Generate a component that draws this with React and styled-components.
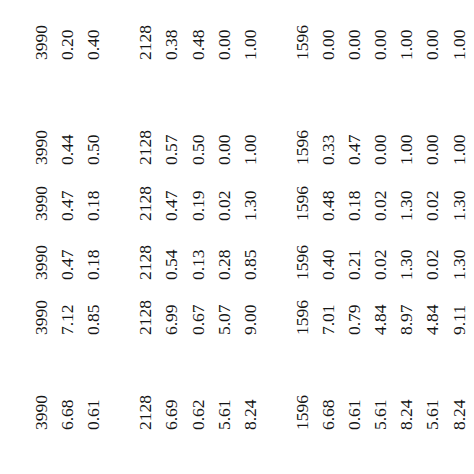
import React from 'react'
import styled, { createGlobalStyle } from 'styled-components'

const Global = createGlobalStyle`
  html, body {
    margin: 0;
    padding: 0;
    background: #fff;
  }
`

// columns as they read once the sheet is turned upright
const columns = [
  [['3990', '6.68', '0.61'], ['2128', '6.69', '0.62', '5.61', '8.24'], ['1596', '6.68', '0.61', '5.61', '8.24', '5.61', '8.24']],
  [['3990', '7.12', '0.85'], ['2128', '6.99', '0.67', '5.07', '9.00'], ['1596', '7.01', '0.79', '4.84', '8.97', '4.84', '9.11']],
  [['3990', '0.47', '0.18'], ['2128', '0.54', '0.13', '0.28', '0.85'], ['1596', '0.40', '0.21', '0.02', '1.30', '0.02', '1.30']],
  [['3990', '0.47', '0.18'], ['2128', '0.47', '0.19', '0.02', '1.30'], ['1596', '0.48', '0.18', '0.02', '1.30', '0.02', '1.30']],
  [['3990', '0.44', '0.50'], ['2128', '0.57', '0.50', '0.00', '1.00'], ['1596', '0.33', '0.47', '0.00', '1.00', '0.00', '1.00']],
  [['3990', '0.20', '0.40'], ['2128', '0.38', '0.48', '0.00', '1.00'], ['1596', '0.00', '0.00', '0.00', '1.00', '0.00', '1.00']],
]

const Page = styled.div`
  width: 474px;
  height: 474px;
  overflow: hidden;
  background: #fff;
`

const Sheet = styled.div`
  width: 474px;
  height: 474px;
  box-sizing: border-box;
  padding: 28px 0 0 44px;
  transform: rotate(-90deg);
  transform-origin: 50% 50%;
`

const Table = styled.div`
  display: grid;
  grid-template-columns: 95px 55px 59px 56px 105px 60px;
  grid-auto-rows: 26.1px;
  font-family: "Liberation Serif", "Times New Roman", serif;
  font-size: 17.5px;
  line-height: 26.1px;
  color: #141414;
`

const Cell = styled.div`
  white-space: nowrap;
`

const Gap = styled.div`
  grid-column: 1 / -1;
`

export default function App() {
  const groups = columns[0].map((g, gi) => g.length)
  return (
    <>
      <Global />
      <Page>
        <Sheet>
          <Table>
            {groups.map((len, gi) => (
              <React.Fragment key={gi}>
                {gi > 0 && <Gap />}
                {Array.from({ length: len }).map((_, ri) =>
                  columns.map((col, ci) => (
                    <Cell key={`${gi}-${ri}-${ci}`}>{col[gi][ri]}</Cell>
                  ))
                )}
              </React.Fragment>
            ))}
          </Table>
        </Sheet>
      </Page>
    </>
  )
}
